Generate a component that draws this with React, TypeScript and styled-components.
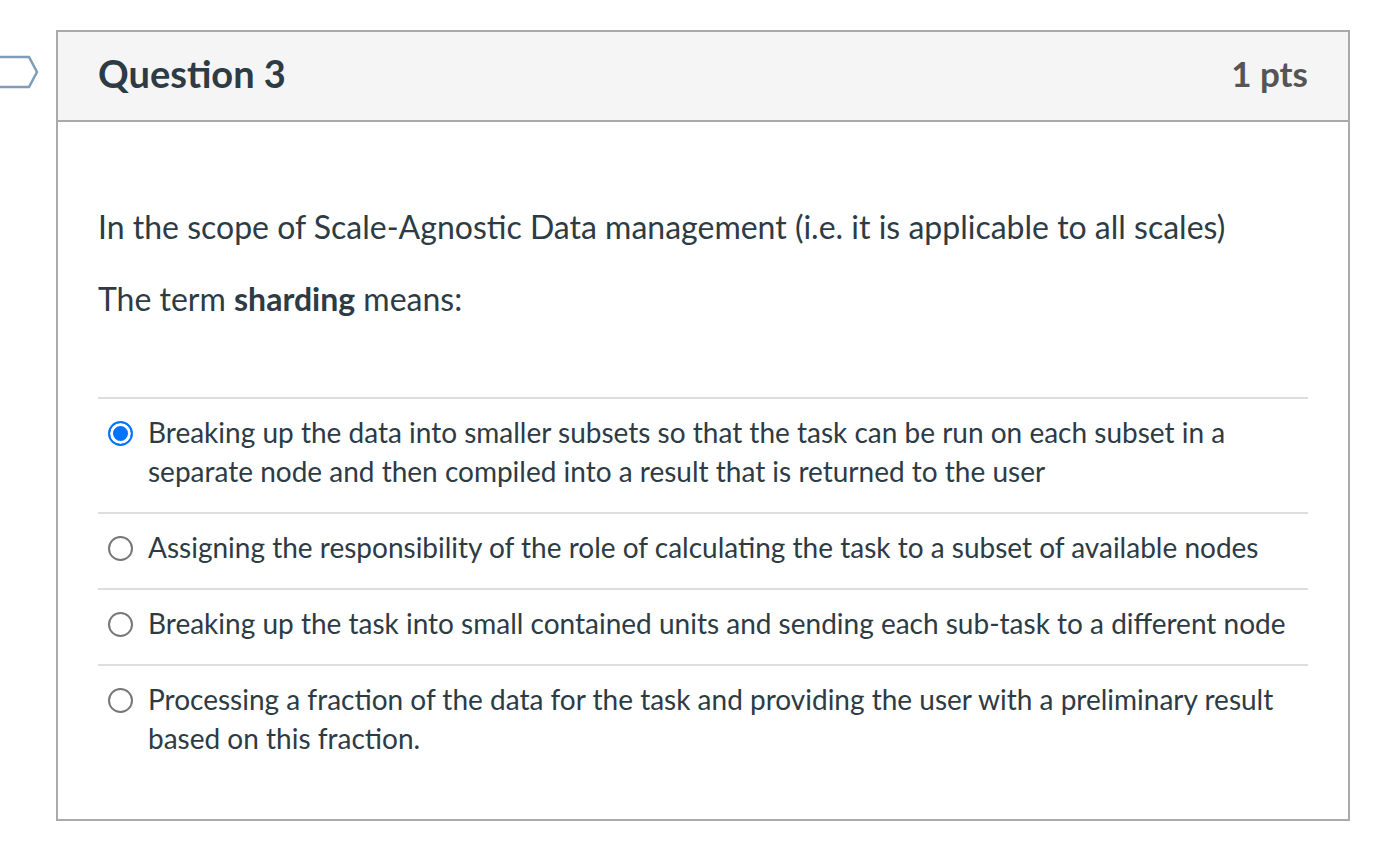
import React from "react";
import styled, { createGlobalStyle } from "styled-components";

const Global = createGlobalStyle`
  html, body { margin: 0; padding: 0; background: #ffffff; }
  body { font-family: Lato, "Noto Sans", sans-serif; color: #2d3b45; }
`;

const Page = styled.div`
  position: relative;
  padding: 30px 29px 0 56px;
`;

const Bookmark = styled.svg`
  position: absolute;
  left: 0;
  top: 55px;
`;

const Card = styled.section`
  border: 2px solid #aaaaaa;
  width: 1290px;
`;

const Header = styled.header`
  display: flex;
  align-items: center;
  justify-content: space-between;
  box-sizing: border-box;
  height: 90px;
  padding: 0 40px 6px;
  background: #f5f5f5;
  border-bottom: 2px solid #aaaaaa;
`;

const Title = styled.h2`
  margin: 0;
  font-size: 38px;
  font-weight: 700;
  color: #2d3b45;
`;

const Points = styled.div`
  font-size: 35px;
  font-weight: 700;
  color: #555555;
`;

const Body = styled.div`
  padding: 81px 40px 40px;
`;

const Para = styled.p`
  margin: 0 0 24px;
  font-size: 32px;
  line-height: 48px;
`;

const Answers = styled.div`
  margin-top: 74px;
`;

const Row = styled.label`
  display: flex;
  align-items: flex-start;
  gap: 15px;
  padding: 14px 0 21px 10px;
  border-top: 2px solid #dddddd;
  font-size: 28px;
  line-height: 39px;
`;

const Radio = styled.span<{ $checked?: boolean }>`
  flex: none;
  box-sizing: border-box;
  width: 25px;
  height: 25px;
  margin-top: 8px;
  border-radius: 50%;
  border: 2px solid ${(p) => (p.$checked ? "#0374ff" : "#777777")};
  background: ${(p) => (p.$checked ? "#0374ff" : "#ffffff")};
  box-shadow: ${(p) => (p.$checked ? "inset 0 0 0 3px #ffffff" : "none")};
`;

const answers = [
  "Breaking up the data into smaller subsets so that the task can be run on each subset in a separate node and then compiled into a result that is returned to the user",
  "Assigning the responsibility of the role of calculating the task to a subset of available nodes",
  "Breaking up the task into small contained units and sending each sub-task to a different node",
  "Processing a fraction of the data for the task and providing the user with a preliminary result based on this fraction.",
];

export default function App() {
  return (
    <>
      <Global />
      <Page>
        <Bookmark width="40" height="36" viewBox="0 0 40 36">
          <path d="M-4 2 H29 L37 17 L29 32 H-4 Z" fill="#ffffff" stroke="#7f9db6" strokeWidth="2.5" strokeLinejoin="miter" />
        </Bookmark>
        <Card>
          <Header>
            <Title>Question 3</Title>
            <Points>1 pts</Points>
          </Header>
          <Body>
            <Para>In the scope of Scale-Agnostic Data management (i.e. it is applicable to all scales)</Para>
            <Para>
              The term <strong>sharding</strong> means:
            </Para>
            <Answers>
              {answers.map((a, i) => (
                <Row key={i}>
                  <Radio $checked={i === 0} />
                  <span>{a}</span>
                </Row>
              ))}
            </Answers>
          </Body>
        </Card>
      </Page>
    </>
  );
}
